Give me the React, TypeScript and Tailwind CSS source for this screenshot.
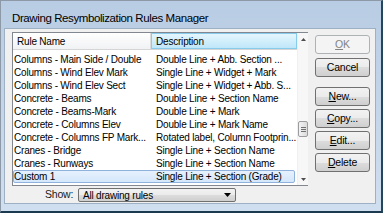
const RULES: [string, string][] = [
  ['Columns - Main Side / Double', 'Double Line + Abb. Section ...'],
  ['Columns - Wind Elev Mark', 'Single Line + Widget + Mark'],
  ['Columns - Wind Elev Sect', 'Single Line + Widget + Abb. S...'],
  ['Concrete - Beams', 'Double Line + Section Name'],
  ['Concrete - Beams-Mark', 'Double Line + Mark'],
  ['Concrete - Columns Elev', 'Double Line + Mark Name'],
  ['Concrete - Columns FP Mark...', 'Rotated label, Column Footprin...'],
  ['Cranes - Bridge', 'Single Line + Section Name'],
  ['Cranes - Runways', 'Single Line + Section Name'],
  ['Custom 1', 'Single Line + Section (Grade)'],
]

const BTN =
  'h-[19px] w-[55px] rounded-[3px] border border-[#707070] bg-[linear-gradient(#f2f2f2_0%,#ebebeb_50%,#dddddd_50%,#cfcfcf_100%)] text-[10.5px] text-black flex items-center justify-center'

export default function App() {
  return (
    <div className="w-[386px] h-[215px] bg-white overflow-hidden font-['Liberation_Sans',Arial,sans-serif] tracking-[-0.2px]">
      {/* window frame */}
      <div className="w-[383px] h-[213px] flex flex-col border-l border-t border-[#8d99a6] border-r-2 border-b-2 border-r-[#23465d] border-b-[#1c3a4f] bg-gradient-to-b from-[#b8cce3] to-[#d0dff0]">
        <div className="h-[27px] flex items-center pl-[11px] pt-[9px] text-[11.5px] text-black tracking-[-0.4px]">
          Drawing Resymbolization Rules Manager
        </div>

        {/* client area */}
        <div className="ml-[3px] mr-[5px] h-[176px] bg-[#f0f0f0] border border-[#9eb0c4] flex">
          <div className="flex flex-col pl-[7px] pt-[3px]">
            {/* list view */}
            <div className="w-[296px] h-[154px] border border-[#828790] bg-white flex">
              <div className="flex-1 flex flex-col">
                <div className="h-[17px] flex text-[10px] border-b border-[#d5d5d5] bg-gradient-to-b from-white to-[#f1f2f4]">
                  <div className="w-[138px] pl-[4px] flex items-center border-r border-[#dcdcdc]">Rule Name</div>
                  <div className="flex-1 pl-[4px] flex items-center border border-[#88cbeb] bg-gradient-to-b from-[#e5f6fd] to-[#bfe7f9]">
                    Description
                  </div>
                </div>
                <div className="pt-[3px] flex flex-col">
                  {RULES.map(([name, desc], i) => (
                    <div
                      key={name}
                      className={`h-[13px] flex items-center text-[10px] text-black leading-none whitespace-nowrap ${
                        i === RULES.length - 1
                          ? 'bg-gradient-to-b from-[#e6f1fd] to-[#d5e7fb] border border-[#8fb2dc] rounded-[2px] mr-[2px]'
                          : 'border border-transparent'
                      }`}
                    >
                      <div className="w-[138px]">{name}</div>
                      <div className="pl-[4px]">{desc}</div>
                    </div>
                  ))}
                </div>
              </div>

              {/* scrollbar */}
              <div className="w-[13px] flex flex-col items-center bg-[#f7f7f7] border-l border-[#f0f0f0]">
                <div className="h-[12px] flex items-center justify-center">
                  <svg width="5" height="3" viewBox="0 0 5 3">
                    <path d="M0 3 L2.5 0 L5 3 Z" fill="#4d4d4d" />
                  </svg>
                </div>
                <div className="flex-1 w-full flex flex-col items-center pt-[76px]">
                  <div className="w-[10px] h-[16px] rounded-[2px] border border-[#9a9ca0] bg-gradient-to-r from-[#f3f3f3] to-[#dcdcdc] flex flex-col items-center justify-center gap-[1px]">
                    <div className="w-[5px] h-px bg-[#6f7073]" />
                    <div className="w-[5px] h-px bg-[#6f7073]" />
                    <div className="w-[5px] h-px bg-[#6f7073]" />
                  </div>
                </div>
                <div className="h-[12px] flex items-center justify-center">
                  <svg width="5" height="3" viewBox="0 0 5 3">
                    <path d="M0 0 L5 0 L2.5 3 Z" fill="#4d4d4d" />
                  </svg>
                </div>
              </div>
            </div>

            {/* show filter */}
            <div className="mt-[2px] flex items-center h-[14px]">
              <span className="ml-[33px] w-[33px] text-[10.5px] text-[#1a1a1a]">Show:</span>
              <div className="w-[158px] h-[14px] rounded-[2px] border border-[#707070] bg-[linear-gradient(#f2f2f2_0%,#ebebeb_50%,#dddddd_50%,#cfcfcf_100%)] flex items-center justify-between pl-[4px] pr-[4px] text-[10px]">
                <span>All drawing rules</span>
                <svg width="7" height="4" viewBox="0 0 7 4">
                  <path d="M0 0 L7 0 L3.5 4 Z" fill="#000" />
                </svg>
              </div>
            </div>
          </div>

          {/* buttons */}
          <div className="ml-[7px] pt-[6px] flex flex-col">
            <div className="h-[19px] w-[55px] rounded-[3px] border border-[#adb2b5] bg-[#f4f4f4] text-[10.5px] text-[#838383] flex items-center justify-center">
              <span><span className="underline">O</span>K</span>
            </div>
            <div className={`${BTN} mt-[4px]`}>Cancel</div>
            <div className="mt-[10px] flex flex-col gap-[3px]">
              <div className={BTN}><span><span className="underline">N</span>ew...</span></div>
              <div className={BTN}><span><span className="underline">C</span>opy...</span></div>
              <div className={BTN}><span><span className="underline">E</span>dit...</span></div>
              <div className={BTN}><span><span className="underline">D</span>elete</span></div>
            </div>
          </div>
        </div>
      </div>
    </div>
  )
}
